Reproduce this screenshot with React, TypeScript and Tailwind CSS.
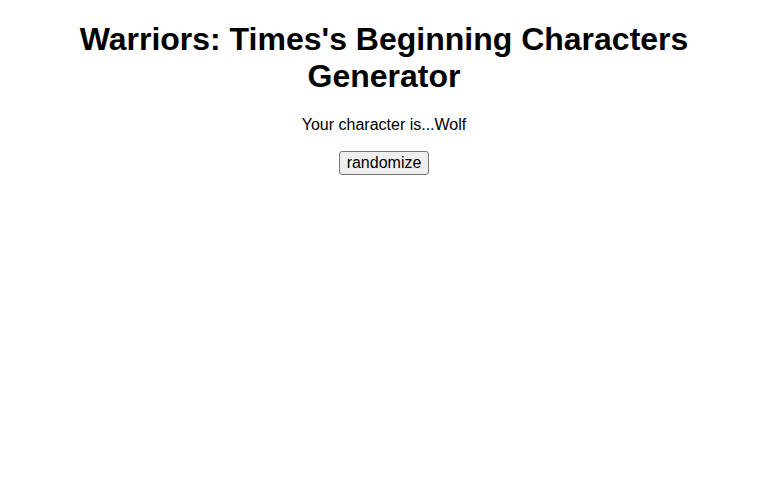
import { useState } from 'react';

const characters = ['Wolf', 'Fox', 'Hawk', 'Bear', 'Owl', 'Badger'];

export default function App() {
  const [character, setCharacter] = useState('Wolf');

  const randomize = () => {
    setCharacter(characters[Math.floor(Math.random() * characters.length)]);
  };

  return (
    <div className="min-h-screen bg-white text-center text-black font-['Liberation_Sans',Arial,sans-serif]">
      <div className="pt-[21.44px]">
        <h1 className="text-[32px] leading-[36.8px] font-bold mb-[21.44px]">
          Warriors: Times's Beginning Characters Generator
        </h1>
        <p className="text-base leading-[18.4px] mb-4">Your character is...{character}</p>
        <button
          onClick={randomize}
          className="text-base leading-[18.4px] px-[7px] py-[2px] border border-[#767676] rounded-[3px] bg-[#efefef] text-black hover:bg-[#e5e5e5]"
        >
          randomize
        </button>
      </div>
    </div>
  );
}
